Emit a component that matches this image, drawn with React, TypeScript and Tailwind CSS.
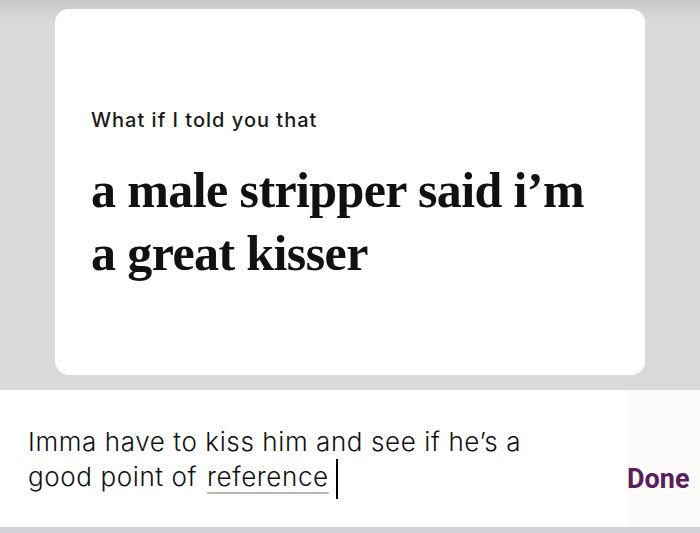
export default function App() {
    return (
        <div className="flex h-[533px] w-[700px] flex-col overflow-hidden bg-[#d9d9d9]">
            <div className="bg-[linear-gradient(to_bottom,#c8c8c8,#d9d9d9_22px)] px-[55px] pb-[15px] pt-[9px]">
                <div className="h-[366px] rounded-[14px] bg-white pl-[36px] pt-[99px]">
                    <p className="font-['Inter',sans-serif] text-[20px] font-medium leading-[24px] tracking-[1px] text-[#1a1a1a]">
                        What if I told you that
                    </p>
                    <h1 className="mt-[27px] font-['Liberation_Serif',serif] text-[50px] font-bold leading-[63px] tracking-[-0.6px] text-[#111]">
                        a male stripper said i’m
                        <br />
                        a great kisser
                    </h1>
                </div>
            </div>
            <div className="flex h-[137px] bg-white">
                <div className="flex-1 pl-[28px] pt-[34px] font-['Inter',sans-serif] text-[26px] font-light leading-[35px] tracking-[0.6px] text-[#111]">
                    Imma have to kiss him and see if he’s a
                    <br />
                    good point of{' '}
                    <span className="ml-[2px] underline decoration-[#b8b8b8] decoration-2 underline-offset-[6px]">
                        reference
                    </span>
                    <span className="-my-[5px] ml-[7px] inline-block h-[40px] w-[2px] bg-black align-middle" />
                </div>
                <div className="flex w-[73px] items-end bg-[#fcfbf9] pb-[32px]">
                    <span className="font-['Roboto',sans-serif] text-[27px] font-bold leading-[32px] text-[#5b1d5d]">
                        Done
                    </span>
                </div>
            </div>
            <div className="h-[6px] bg-[#d1d3d6]" />
        </div>
    );
}
